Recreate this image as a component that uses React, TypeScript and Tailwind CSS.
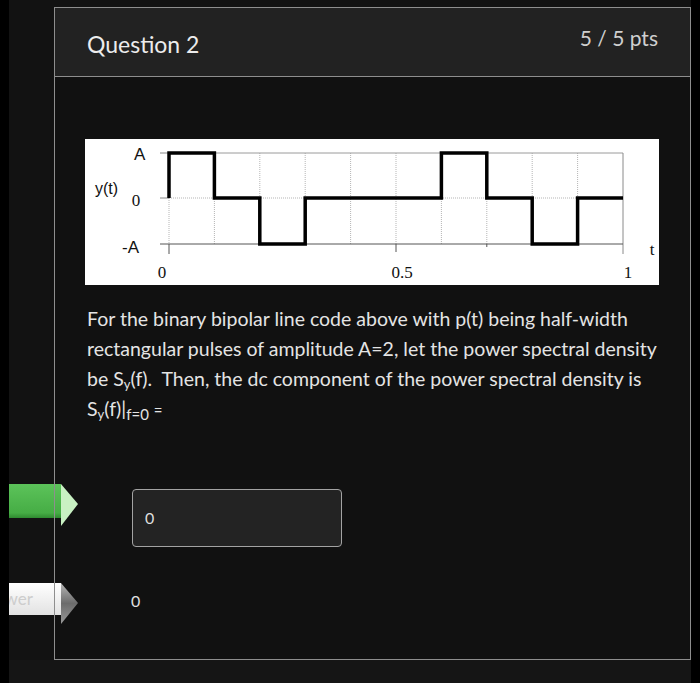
import React from 'react';

// plot geometry, in svg units (the white chart box is 574 x 146)
const X0 = 84;
const STEP = 45.4;
const YA = 14;
const Y0 = 59;
const YM = 105;
const levels = [1, 0, -1, 0, 0, 0, 1, 0, -1, 0];

const levelY = (l: number) => (l === 1 ? YA : l === -1 ? YM : Y0);

function Waveform() {
    const xs = Array.from({ length: 11 }, (_, i) => X0 + i * STEP);
    let d = `M${X0},${Y0}`;
    levels.forEach((l, i) => {
        d += ` L${xs[i]},${levelY(l)} L${xs[i + 1]},${levelY(l)}`;
    });

    return (
        <div className="w-[574px] h-[146px] bg-white">
            <svg width="574" height="146" viewBox="0 0 574 146">
                {/* grid */}
                {xs.slice(1, 10).map(x => (
                    <line key={x} x1={x} y1={YA} x2={x} y2={YM} stroke="#b5b5b5" strokeWidth="1" strokeDasharray="1 1" />
                ))}
                <line x1={X0} y1={Y0} x2={xs[10]} y2={Y0} stroke="#b5b5b5" strokeWidth="1" strokeDasharray="1 1" />
                <line x1={X0} y1={Y0} x2={X0} y2={YM} stroke="#b5b5b5" strokeWidth="1" strokeDasharray="1 1" />
                <line x1={X0} y1={YA} x2={xs[10]} y2={YA} stroke="#9a9a9a" strokeWidth="1" />
                <line x1={xs[10]} y1={YA} x2={xs[10]} y2={YM + 10} stroke="#8a8a8a" strokeWidth="1" />

                {/* axes and ticks */}
                <line x1={75} y1={YM} x2={xs[10]} y2={YM} stroke="#555" strokeWidth="1" />
                <line x1={75} y1={YA} x2={X0} y2={YA} stroke="#888" strokeWidth="1" />
                <line x1={75} y1={Y0} x2={X0} y2={Y0} stroke="#888" strokeWidth="1" />
                <line x1={X0} y1={YM} x2={X0} y2={YM + 10} stroke="#555" strokeWidth="1" />
                <line x1={xs[5]} y1={YM} x2={xs[5]} y2={YM + 8} stroke="#555" strokeWidth="1" />
                <line x1={xs[7]} y1={YM} x2={xs[7]} y2={YM + 3} stroke="#555" strokeWidth="1" />

                <path d={d} fill="none" stroke="#000" strokeWidth="3.5" strokeLinejoin="miter" />

                {/* labels */}
                <g fontFamily="'Liberation Sans', Arial, sans-serif" fill="#111">
                    <text x="49" y="21" fontSize="17">A</text>
                    <text x="10" y="55" fontSize="16">y(t)</text>
                    <text x="37" y="114" fontSize="17">-A</text>
                </g>
                <g fontFamily="'Liberation Serif', 'Times New Roman', serif" fill="#111" fontSize="17">
                    <text x="51" y="67" textAnchor="middle">0</text>
                    <text x="77" y="139" textAnchor="middle">0</text>
                    <text x="317" y="139" textAnchor="middle">0.5</text>
                    <text x="543" y="139" textAnchor="middle">1</text>
                    <text x="567" y="116" textAnchor="middle">t</text>
                </g>
            </svg>
        </div>
    );
}

function GreenArrow() {
    return (
        <svg width="69" height="42" viewBox="0 0 69 42">
            <defs>
                <linearGradient id="gbody" x1="0" y1="0" x2="0" y2="1">
                    <stop offset="0" stopColor="#5cc35a" />
                    <stop offset="0.85" stopColor="#46ad45" />
                    <stop offset="1" stopColor="#2f8a30" />
                </linearGradient>
            </defs>
            <rect x="0" y="0" width="52" height="34" fill="url(#gbody)" />
            <polygon points="52,0 69,20 52,42" fill="#c9f1c3" />
        </svg>
    );
}

function GreyArrow() {
    return (
        <div className="flex">
            <div className="w-[52px] h-[32px] overflow-hidden flex items-center justify-end pr-[28px] bg-gradient-to-b from-white to-[#e2e2e2]">
                <span className="whitespace-nowrap text-[17px] text-[#cdcdcd]">Answer</span>
            </div>
            <svg width="17" height="42" viewBox="0 0 17 42">
                <defs>
                    <linearGradient id="gtri" x1="0" y1="0" x2="0" y2="1">
                        <stop offset="0" stopColor="#b5b5b5" />
                        <stop offset="0.5" stopColor="#6c6c6c" />
                        <stop offset="1" stopColor="#9a9a9a" />
                    </linearGradient>
                </defs>
                <polygon points="0,0 17,20 0,41" fill="url(#gtri)" />
            </svg>
        </div>
    );
}

export default function App() {
    return (
        <div className="flex w-[700px] h-[683px] bg-[#121212] font-['Lato','Noto_Sans',sans-serif]">
            <div className="w-[9px] bg-black" />
            <div className="flex-1 flex flex-col">
                <div className="h-[7px]" />
                {/* Question card */}
                <div className="relative ml-[45px] w-[637px] border border-[#8e8e8e] bg-[#111111]">
                    <div className="h-[69px] flex justify-between bg-[#222222] border-b border-[#8e8e8e] px-[32px]">
                        <h2 className="mt-[22px] text-[23px] leading-[28px] text-[#ececec]">Question 2</h2>
                        <div className="mt-[17px] text-[21px] leading-[26px] text-[#cfcfcf]">5 / 5 pts</div>
                    </div>

                    <div className="pt-[62px] pb-[40px] pl-[30px]">
                        <Waveform />

                        <p className="mt-[19px] pl-[2px] pr-[18px] text-[19.5px] leading-[30px] text-[#e4e4e4]">
                            For the binary bipolar line code above with p(t) being half-width rectangular pulses of amplitude A=2, let the power spectral density be S<sub className="text-[13px] leading-none">y</sub>(f).&nbsp; Then, the dc component of the power spectral density is S<sub className="text-[13px] leading-none">y</sub>(f)|<sub className="text-[15px] leading-none">f=0</sub> <span className="text-[15px] leading-none">=</span>
                        </p>

                        {/* answers */}
                        <div className="relative mt-[65px] -ml-[30px]">
                            <div className="absolute -left-[46px] -top-[5px]">
                                <GreenArrow />
                            </div>
                            <div className="ml-[77px] w-[210px] h-[58px] rounded border border-[#a3a3a3] bg-[#232323] flex items-center pl-[12px] text-[16px] text-[#dedede]">
                                0
                            </div>
                        </div>

                        <div className="relative mt-[36px] -ml-[30px] h-[36px] flex items-center">
                            <div className="absolute -left-[46px] top-0">
                                <GreyArrow />
                            </div>
                            <span className="ml-[76px] text-[16px] text-[#e0e0e0]">0</span>
                        </div>
                    </div>

                    {/* card edge drawn over the answer arrows */}
                    <div className="absolute -left-px top-0 bottom-0 w-px bg-[#8e8e8e]" />
                </div>
                <div className="flex-1 bg-[#151515]" />
            </div>
            <div className="w-[9px] bg-black" />
        </div>
    );
}
